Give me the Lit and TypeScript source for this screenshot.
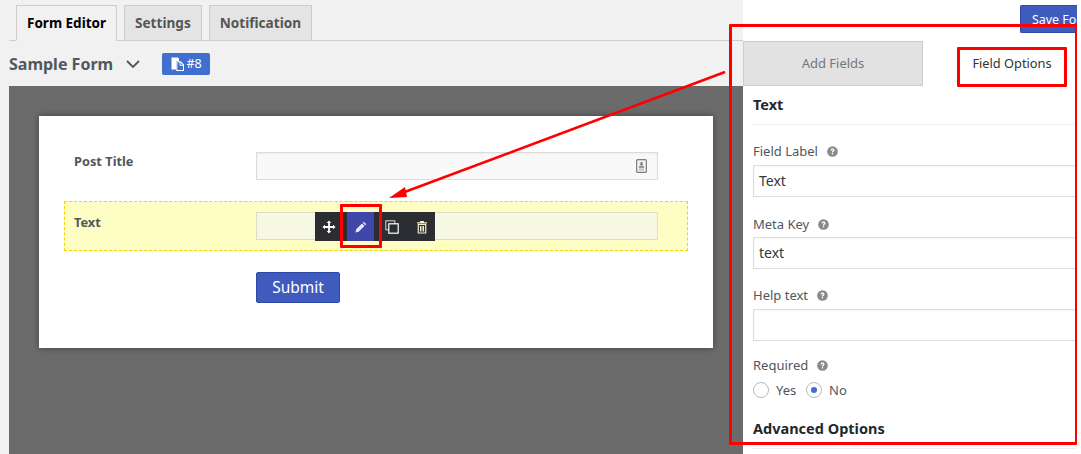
import { LitElement, html, css, svg } from "lit";
import { customElement } from "lit/decorators.js";

const help = html`<svg class="help" viewBox="0 0 12 12"><circle cx="6" cy="6" r="5.800" fill="#8a8a8a"/><path d="M3.900 4.700c0-1.200 1-1.900 2.100-1.900s2.200.7 2.200 1.800c0 1.400-1.500 1.400-1.500 2.500H5.300c0-1.700 1.300-1.600 1.300-2.400 0-.4-.2-.6-.6-.6s-.7.200-.7.700z" fill="#fff"/><rect x="5.300" y="7.800" width="1.400" height="1.400" fill="#fff"/></svg>`;

@customElement("app-root")
export class AppRoot extends LitElement {
  static styles = css`
    :host { display: block; width: 1081px; height: 454px; overflow: hidden; position: relative; background: #f1f1f1; font-family: "Noto Sans", "Open Sans", sans-serif; color: #555; font-size: 13px; }
    * { box-sizing: border-box; }
    .layout { display: flex; align-items: stretch; height: 454px; padding-left: 9px; }
    .main { width: 734px; flex: none; display: flex; flex-direction: column; }
    .tabs { display: flex; height: 36px; margin-top: 5px; padding-left: 7px; gap: 7px; border-bottom: 1px solid #ccc; }
    .tab { height: 36px; padding: 0 10px; border: 1px solid #ccc; background: #e4e4e4; color: #555; font-weight: 700; font-size: 13.600px; line-height: 34px; white-space: nowrap; }
    .tab.on { background: #f1f1f1; color: #000; border-bottom-color: #f1f1f1; font-size: 13.500px; }
    .title { height: 45px; display: flex; align-items: center; color: #50575e; }
    .title b { font-size: 16px; font-weight: 700; }
    .chev { width: 16px; height: 10px; margin-left: 12px; }
    .chip { margin-left: 21px; width: 48px; height: 22px; border-radius: 2px; background: #3f6fcf; color: #fff; font-size: 12.500px; display: flex; align-items: center; justify-content: center; gap: 3px; }
    .chip svg { width: 13px; height: 14px; }
    .canvas { flex: 1; background: #6b6b6b; padding: 30px; }
    .card { width: 674px; height: 232px; background: #fff; box-shadow: 0 0 7px rgba(0,0,0,.4); padding: 36px 25px 0; display: flex; flex-direction: column; }
    .row { display: grid; grid-template-columns: 182px 402px; padding-left: 10px; }
    .row label { font-weight: 700; font-size: 12.800px; color: #50575e; line-height: 19px; }
    .fake { height: 28px; border: 1px solid #dcdcdc; background: #f9f9f9; box-shadow: inset 0 1px 2px rgba(0,0,0,.05); display: flex; align-items: center; justify-content: flex-end; padding-right: 10px; position: relative; }
    .fake svg { width: 11px; height: 14px; }
    .row.sel { margin: 21px 0 0; height: 50px; border: 1px dashed #f2d600; background: #fefdc3; align-items: center; padding-left: 9px; }
    .row.sel label { margin-top: -8px; }
    .row.sel .fake { background: #f7f8e3; border-color: #dedec4; box-shadow: none; }
    .tools { position: absolute; left: 58px; top: -1px; width: 120px; height: 29px; background: #2c2d33; display: flex; align-items: center; color: #fff; }
    .tools span { height: 29px; display: flex; align-items: center; justify-content: center; }
    .tools svg { width: 14px; height: 14px; }
    .tools .t1 { width: 32px; padding-right: 4px; }
    .tools .t2 { width: 27px; background: #3f48a8; }
    .tools .t2 svg { width: 12px; height: 12px; }
    .tools .t3 { width: 35px; }
    .tools .t4 { width: 26px; }
    .submit { margin: 21px 0 0 192px; width: 84px; height: 31px; padding-bottom: 2px; background: #3f5bbd; border: 1px solid #2e4aa8; border-radius: 2px; color: #fff; font-size: 15.500px; display: flex; align-items: center; justify-content: center; }
    .side { width: 338px; flex: none; background: #fff; display: flex; flex-direction: column; }
    .stabs { display: flex; margin-top: 41px; height: 45px; }
    .stab { width: 180px; background: #e2e2e2; border: 1px solid #ccc; color: #72777c; text-align: center; line-height: 43px; font-size: 13px; }
    .stab.on { flex: 1; width: auto; background: #fff; border: 0; color: #333; padding-left: 20px; line-height: 44px; font-size: 12.800px; }
    .body { padding: 0 4px 0 10px; }
    .h { font-weight: 700; font-size: 14.500px; color: #23282d; line-height: 20px; }
    .h.first { margin-top: 8px; padding-bottom: 10px; border-bottom: 1px solid #eee; }
    .f { height: 18px; color: #50575e; line-height: 18px; font-size: 13px; display: flex; align-items: center; gap: 9px; }
    .m17 { margin-top: 17px; } .m18 { margin-top: 18px; } .m15 { margin-top: 15px; }
    .inp { height: 32px; border: 1px solid #ddd; border-right: 0; box-shadow: inset 0 1px 2px rgba(0,0,0,.04); color: #32373c; font-size: 14px; line-height: 30px; padding-left: 5px; margin-top: 4px; }
    .inp.top5 { margin-top: 5px; }
    .help { width: 11px; height: 11px; }
    .radios { display: flex; align-items: center; margin-top: 7px; height: 18px; color: #50575e; }
    .radio { width: 16px; height: 16px; border: 1px solid #b4b9be; border-radius: 50%; display: flex; align-items: center; justify-content: center; background: #fff; flex: none; }
    .radio i { width: 6px; height: 6px; background: #3f6fcf; border-radius: 50%; }
    .radios .l1 { margin: 0 7px; width: 23px; }
    .radios .l2 { margin-left: 7px; }
    .h.adv { margin-top: 19px; padding-bottom: 10px; border-bottom: 1px solid #eee; }
    .save { position: absolute; left: 1020px; top: 5px; width: 57px; height: 28px; overflow: hidden; background: #3f5bbd; border: 1px solid #2e4aa8; border-right: 0; border-radius: 2px 0 0 2px; color: #fff; font-size: 12.400px; line-height: 28px; padding-left: 11px; white-space: nowrap; }
    .box { position: absolute; border: 3px solid #f00; border-radius: 1px; pointer-events: none; }
    .b1 { left: 729px; top: 24px; width: 348px; height: 421px; border-right-width: 2px; }
    .b2 { left: 957px; top: 47px; width: 110px; height: 40px; }
    .b3 { left: 340px; top: 204px; width: 42px; height: 44px; }
    .arrow { position: absolute; left: 0; top: 0; width: 1081px; height: 454px; pointer-events: none; }
  `;

  render() {
    return html`
      <div class="layout">
        <div class="main">
          <div class="tabs">
            <div class="tab on">Form Editor</div>
            <div class="tab">Settings</div>
            <div class="tab">Notification</div>
          </div>
          <div class="title">
            <b>Sample Form</b>
            <svg class="chev" viewBox="0 0 16 10"><path d="M2 2l6 6 6-6" fill="none" stroke="#50575e" stroke-width="1.800"/></svg>
            <div class="chip">
              <svg viewBox="0 0 13 14"><path d="M.5.500h6.500l1 1v2.500H5v8.500H.5z" fill="#fff"/><path d="M5.800 4.800h3.700l3 3v5.700H5.800z" fill="none" stroke="#fff" stroke-width="1.100"/><path d="M9 4.800v3.500h3.500" fill="none" stroke="#fff"/></svg>
              <span>#8</span>
            </div>
          </div>
          <div class="canvas">
            <div class="card">
              <div class="row">
                <label>Post Title</label>
                <div class="fake"><svg viewBox="0 0 11 14"><rect x=".6" y=".6" width="9.800" height="12.800" rx="1" fill="#eee" stroke="#808080" stroke-width="1.200"/><path d="M4.700 3h1.600l.5 3.500H4.200z" fill="#777"/><rect x="3" y="7" width="5" height="2" fill="#999"/><rect x="3" y="9.500" width="5" height="2" fill="#c4c4c4"/></svg></div>
              </div>
              <div class="row sel">
                <label>Text</label>
                <div class="fake">
                  <div class="tools">
                    <span class="t1"><svg viewBox="0 0 14 14"><path d="M7 .5l2.300 2.500H7.900v3.100H11V4.700l2.500 2.300L11 9.300V7.900H7.900V11h1.400L7 13.500 4.700 11h1.400V7.900H3v1.400L.5 7 3 4.700v1.400h3.100V3H4.700z" fill="#fff"/></svg></span>
                    <span class="t2"><svg viewBox="0 0 12 12"><path d="M.5 11.500l.7-3.200 5.800-5.800 2.500 2.500-5.800 5.800zM7.800 1.700l1-1 2.500 2.500-1 1z" fill="#e4e8fa"/></svg></span>
                    <span class="t3"><svg viewBox="0 0 14 14"><rect x=".8" y=".8" width="9" height="9" fill="none" stroke="#ccc" stroke-width="1.100"/><rect x="3.800" y="3.800" width="9.400" height="9.400" fill="#2c2d33" stroke="#fff" stroke-width="1.200"/></svg></span>
                    <span class="t4"><svg viewBox="0 0 14 14"><path d="M5 1h4v1.200h3v1.300H2V2.200h3z" fill="#f4f0d0"/><path d="M3.300 4.500h7.400v8.500H3.300z" fill="none" stroke="#f4f0d0" stroke-width="1.200"/><path d="M5.500 6v5.500M7 6v5.500M8.500 6v5.500" stroke="#f4f0d0"/></svg></span>
                  </div>
                </div>
              </div>
              <div class="submit">Submit</div>
            </div>
          </div>
        </div>
        <div class="side">
          <div class="stabs">
            <div class="stab">Add Fields</div>
            <div class="stab on">Field Options</div>
          </div>
          <div class="body">
            <div class="h first">Text</div>
            <div class="f m17">Field Label ${help}</div>
            <div class="inp top5">Text</div>
            <div class="f m18">Meta Key ${help}</div>
            <div class="inp">text</div>
            <div class="f m17">Help text ${help}</div>
            <div class="inp top5"></div>
            <div class="f m15">Required ${help}</div>
            <div class="radios">
              <div class="radio"></div><span class="l1">Yes</span>
              <div class="radio"><i></i></div><span class="l2">No</span>
            </div>
            <div class="h adv">Advanced Options</div>
          </div>
        </div>
      </div>
      <div class="save">Save Form</div>
      <div class="box b1"></div>
      <div class="box b2"></div>
      <div class="box b3"></div>
      <svg class="arrow" viewBox="0 0 1081 454">
        ${svg`<path d="M725 72L402 193" stroke="#f00" stroke-width="2.600" fill="none"/><path d="M389 198l16-11 2 10z" fill="#f00"/>`}
      </svg>
    `;
  }
}
